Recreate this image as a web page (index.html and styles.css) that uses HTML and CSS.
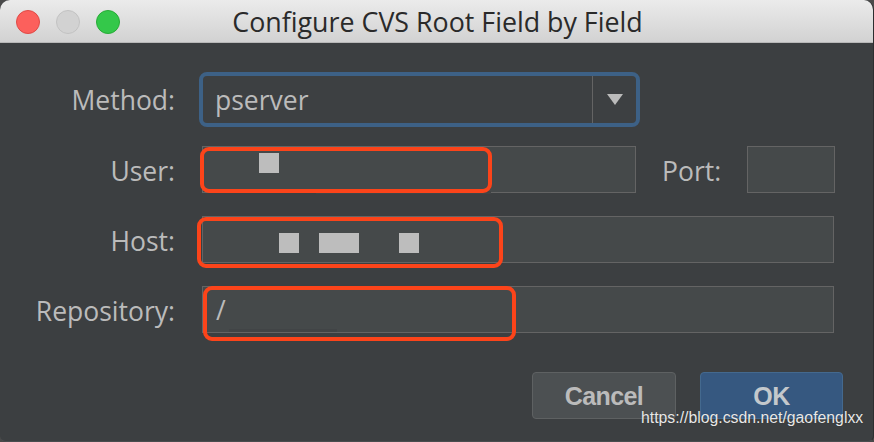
FILE: index.html
```html
<!DOCTYPE html>
<html>
<head>
<meta charset="utf-8">
<link rel="stylesheet" href="styles.css">
</head>
<body>
<div class="window">
  <div class="titlebar">
    <div class="lights">
      <span class="light red"></span>
      <span class="light gray"></span>
      <span class="light green"></span>
    </div>
    <div class="title">Configure CVS Root Field by Field</div>
  </div>
  <div class="content">
    <div class="row row-method">
      <label class="label">Method:</label>
      <div class="combo">
        <span class="combo-text">pserver</span>
        <span class="combo-btn">
          <svg width="16" height="11" viewBox="0 0 16 11"><polygon points="0,0 16,0 8,11" fill="#bbbbbb"/></svg>
        </span>
      </div>
    </div>
    <div class="row">
      <label class="label">User:</label>
      <div class="field field-user">
        <span class="blur sq" style="left:56px;top:6px;width:20px"></span>
        <span class="smudge" style="left:113px;top:44px;width:175px"></span>
        <span class="mark mark-user"></span>
      </div>
      <label class="label label-port">Port:</label>
      <div class="field field-port"></div>
    </div>
    <div class="row">
      <label class="label">Host:</label>
      <div class="field field-wide">
        <span class="blur sq" style="left:76px;top:16px;width:20px"></span>
        <span class="blur sq" style="left:116px;top:16px;width:40px"></span>
        <span class="blur sq" style="left:196px;top:16px;width:20px"></span>
        <span class="mark mark-host"></span>
      </div>
    </div>
    <div class="row">
      <label class="label">Repository:</label>
      <div class="field field-wide">
        <span class="field-text">/</span>
        <span class="smudge" style="left:26px;top:42px;width:108px"></span>
        <span class="mark mark-repo"></span>
      </div>
    </div>
    <div class="buttons">
      <button class="btn btn-cancel">Cancel</button>
      <button class="btn btn-ok">OK</button>
    </div>
  </div>
  <div class="watermark">https://blog.csdn.net/gaofenglxx</div>
</div>
</body>
</html>
```
FILE: styles.css
```css
html, body {
  margin: 0;
  padding: 0;
  background: #4a4a4a;
}
.window {
  position: relative;
  width: 874px;
  height: 442px;
  box-sizing: border-box;
  background: #3c3f41;
  border-radius: 10px 10px 6px 6px;
  overflow: hidden;
  border-right: 1px solid #2c2e2f;
  border-bottom: 1px solid #4a4d4f;
  font-family: "Open Sans", "DejaVu Sans", sans-serif;
}
.titlebar {
  height: 43px;
  box-sizing: border-box;
  background: linear-gradient(#ebebeb, #d2d2d2);
  border-bottom: 1px solid #b8b8b8;
  display: flex;
  align-items: center;
  position: relative;
}
.lights {
  display: flex;
  gap: 16px;
  padding-left: 16px;
  position: absolute;
  left: 0;
  top: 10px;
}
.light {
  width: 24px;
  height: 24px;
  border-radius: 50%;
  box-sizing: border-box;
}
.red { background: #fc605c; border: 1px solid #df4a46; }
.gray { background: #d2d2d2; border: 1px solid #c2c2c2; }
.green { background: #34c84a; border: 1px solid #28ab37; }
.title {
  flex: 1;
  text-align: center;
  font-size: 26.8px;
  color: #2a2a2a;
  line-height: 43px;
  padding-left: 2px;
}
.content {
  padding: 29px 30px 0 0;
}
.row {
  display: flex;
  align-items: center;
  margin-bottom: 23px;
}
.row-method {
  margin-bottom: 19px;
}
.label {
  width: 175px;
  height: 47px;
  text-align: right;
  font-size: 26.5px;
  color: #bbbbbb;
  line-height: 51px;
  flex: none;
  white-space: nowrap;
}
.row-method .label {
  line-height: 48px;
}
.combo {
  margin-left: 24px;
  width: 441px;
  height: 55px;
  box-sizing: border-box;
  border: 4px solid #3d6186;
  border-radius: 8px;
  background: #3d4042;
  display: flex;
  align-items: stretch;
}
.combo-text {
  flex: 1;
  font-size: 26.5px;
  color: #bbbbbb;
  line-height: 48px;
  padding-left: 12px;
}
.combo-btn {
  width: 42px;
  border-left: 1px solid #646464;
  display: flex;
  align-items: center;
  justify-content: center;
  padding-left: 1px;
}
.field {
  position: relative;
  height: 47px;
  box-sizing: border-box;
  background: #45494a;
  border: 1px solid #646464;
  margin-left: 27px;
  flex: none;
}
.field-user { width: 434px; }
.label-port {
  width: auto;
  margin-left: 26px;
}
.field-port {
  width: 88px;
  margin-left: 26px;
}
.field-wide { width: 632px; }
.field-text {
  font-size: 26.5px;
  color: #bbbbbb;
  line-height: 46px;
  padding-left: 13px;
}
.blur {
  position: absolute;
  height: 20px;
  background: #bdbdbd;
}
.smudge {
  position: absolute;
  height: 3px;
  background: #414446;
}
.mark {
  position: absolute;
  box-sizing: border-box;
  border: 4px solid #fc441a;
  border-radius: 9px;
}
.mark-user { left: -3px; top: 0px; width: 292px; height: 46px; }
.mark-host { left: -6px; top: 0px; width: 306px; height: 51px; }
.mark-repo { left: 0px; top: -1px; width: 313px; height: 55px; }
.buttons {
  display: flex;
  justify-content: flex-end;
  gap: 24px;
  padding-top: 16px;
  padding-right: 0;
}
.btn {
  height: 47px;
  width: 144px;
  border-radius: 4px;
  font-family: "Liberation Sans", Arial, sans-serif;
  font-weight: bold;
  font-size: 25px;
  letter-spacing: -0.6px;
  color: #bbbbbb;
  padding: 2px 0 0;
}
.btn-cancel {
  background: #4c5052;
  border: 1px solid #5e6162;
}
.btn-ok {
  width: 143px;
  background: #365880;
  border: 1px solid #44698e;
  color: #c4c8cc;
}
.watermark {
  position: absolute;
  left: 641px;
  top: 409px;
  font-family: "Liberation Sans", Arial, sans-serif;
  font-size: 15.8px;
  color: #e8e8e8;
  text-shadow: 0 0 1px rgba(0,0,0,0.4);
  white-space: nowrap;
}
```
